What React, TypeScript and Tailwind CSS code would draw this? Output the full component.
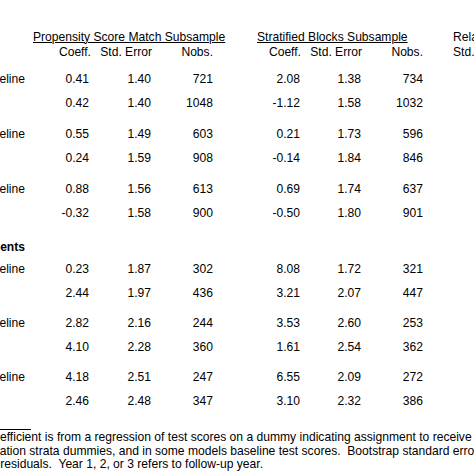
type Row = {
  label: string;
  align: "left" | "right";
  vals: [string, string, string, string, string, string];
};

type Group = { mt: string; rows: [Row, Row] };

const cols = [
  "w-[120px]",
  "w-[66px]",
  "w-[61px]",
  "w-[61px]",
  "w-[88px]",
  "w-[61px]",
  "w-[61px]",
];

// numbers sit a hair left of the header's right edge
const numPad = ["", "pr-[2px]", "pr-[1px]", "", "pr-[1px]", "pr-[1px]", ""];

const section1: Group[] = [
  {
    mt: "mt-[7px]",
    rows: [
      { label: "Year 1, with baseline", align: "right", vals: ["0.41", "1.40", "721", "2.08", "1.38", "734"] },
      { label: "Year 1", align: "left", vals: ["0.42", "1.40", "1048", "-1.12", "1.58", "1032"] },
    ],
  },
  {
    mt: "mt-[7px]",
    rows: [
      { label: "Year 2, with baseline", align: "right", vals: ["0.55", "1.49", "603", "0.21", "1.73", "596"] },
      { label: "Year 2", align: "left", vals: ["0.24", "1.59", "908", "-0.14", "1.84", "846"] },
    ],
  },
  {
    mt: "mt-[7px]",
    rows: [
      { label: "Year 3, with baseline", align: "right", vals: ["0.88", "1.56", "613", "0.69", "1.74", "637"] },
      { label: "Year 3", align: "left", vals: ["-0.32", "1.58", "900", "-0.50", "1.80", "901"] },
    ],
  },
];

const section2: Group[] = [
  {
    mt: "mt-0",
    rows: [
      { label: "Year 1, with baseline", align: "right", vals: ["0.23", "1.87", "302", "8.08", "1.72", "321"] },
      { label: "Year 1", align: "left", vals: ["2.44", "1.97", "436", "3.21", "2.07", "447"] },
    ],
  },
  {
    mt: "mt-[6px]",
    rows: [
      { label: "Year 2, with baseline", align: "right", vals: ["2.82", "2.16", "244", "3.53", "2.60", "253"] },
      { label: "Year 2", align: "left", vals: ["4.10", "2.28", "360", "1.61", "2.54", "362"] },
    ],
  },
  {
    mt: "mt-[6px]",
    rows: [
      { label: "Year 3, with baseline", align: "right", vals: ["4.18", "2.51", "247", "6.55", "2.09", "272"] },
      { label: "Year 3", align: "left", vals: ["2.46", "2.48", "347", "3.10", "2.32", "386"] },
    ],
  },
];

const DataRow = ({ row }: { row: Row }) => (
  <div className="flex leading-[24px] whitespace-nowrap">
    <div
      className={`${cols[0]} shrink-0 overflow-hidden ${
        row.align === "right" ? "text-right" : "text-left"
      }`}
    >
      {row.label}
    </div>
    {row.vals.map((v, i) => (
      <div key={i} className={`${cols[i + 1]} shrink-0 text-right ${numPad[i + 1]}`}>
        {v}
      </div>
    ))}
  </div>
);

const Section = ({ groups }: { groups: Group[] }) => (
  <>
    {groups.map((g, gi) => (
      <div key={gi} className={g.mt}>
        <DataRow row={g.rows[0]} />
        <DataRow row={g.rows[1]} />
      </div>
    ))}
  </>
);

export default function App() {
  const headers = ["Coeff.", "Std. Error", "Nobs.", "Coeff.", "Std. Error", "Nobs."];

  return (
    <div className="w-[474px] h-[474px] overflow-hidden bg-white text-black text-[12.1px] font-['Liberation_Sans',Arial,sans-serif]">
      <div className="-ml-[95px] pt-[30px]">
        {/* group titles */}
        <div className="flex leading-[15px] whitespace-nowrap">
          <div className={`${cols[0]} shrink-0`} />
          <div className="w-[188px] shrink-0 pl-[8px]">
            <span className="underline decoration-1">Propensity Score Match Subsample</span>
          </div>
          <div className="w-[210px] shrink-0 pl-[44px]">
            <span className="underline decoration-1">Stratified Blocks Subsample</span>
          </div>
          <div className="shrink-0 pl-[30px]">Relative Effect</div>
        </div>
        {/* column headers */}
        <div className="flex leading-[15px] whitespace-nowrap">
          <div className={`${cols[0]} shrink-0`} />
          {headers.map((h, i) => (
            <div key={i} className={`${cols[i + 1]} shrink-0 text-right`}>
              {h}
            </div>
          ))}
          <div className="shrink-0 pl-[30px]">Std. Dev.</div>
        </div>

        <Section groups={section1} />

        <div className="mt-[12px] leading-[20px] font-bold flex">
          <div className={`${cols[0]} shrink-0 text-right whitespace-nowrap overflow-hidden`}>
            Older students
          </div>
        </div>

        <Section groups={section2} />
      </div>

      {/* footnote */}
      <div className="mt-[16px] -ml-[60px] w-[91px] h-px bg-black" />
      <div className="mt-px leading-[13.5px] whitespace-pre">
        <div className="-ml-[37px]">
          The coefficient is from a regression of test scores on a dummy indicating assignment to receive vouchers,
        </div>
        <div className="-ml-[50px]">
          randomization strata dummies, and in some models baseline test scores.  Bootstrap standard errors are
        </div>
        <div className="-ml-[20px]">the residuals.  Year 1, 2, or 3 refers to follow-up year.</div>
      </div>
    </div>
  );
}
